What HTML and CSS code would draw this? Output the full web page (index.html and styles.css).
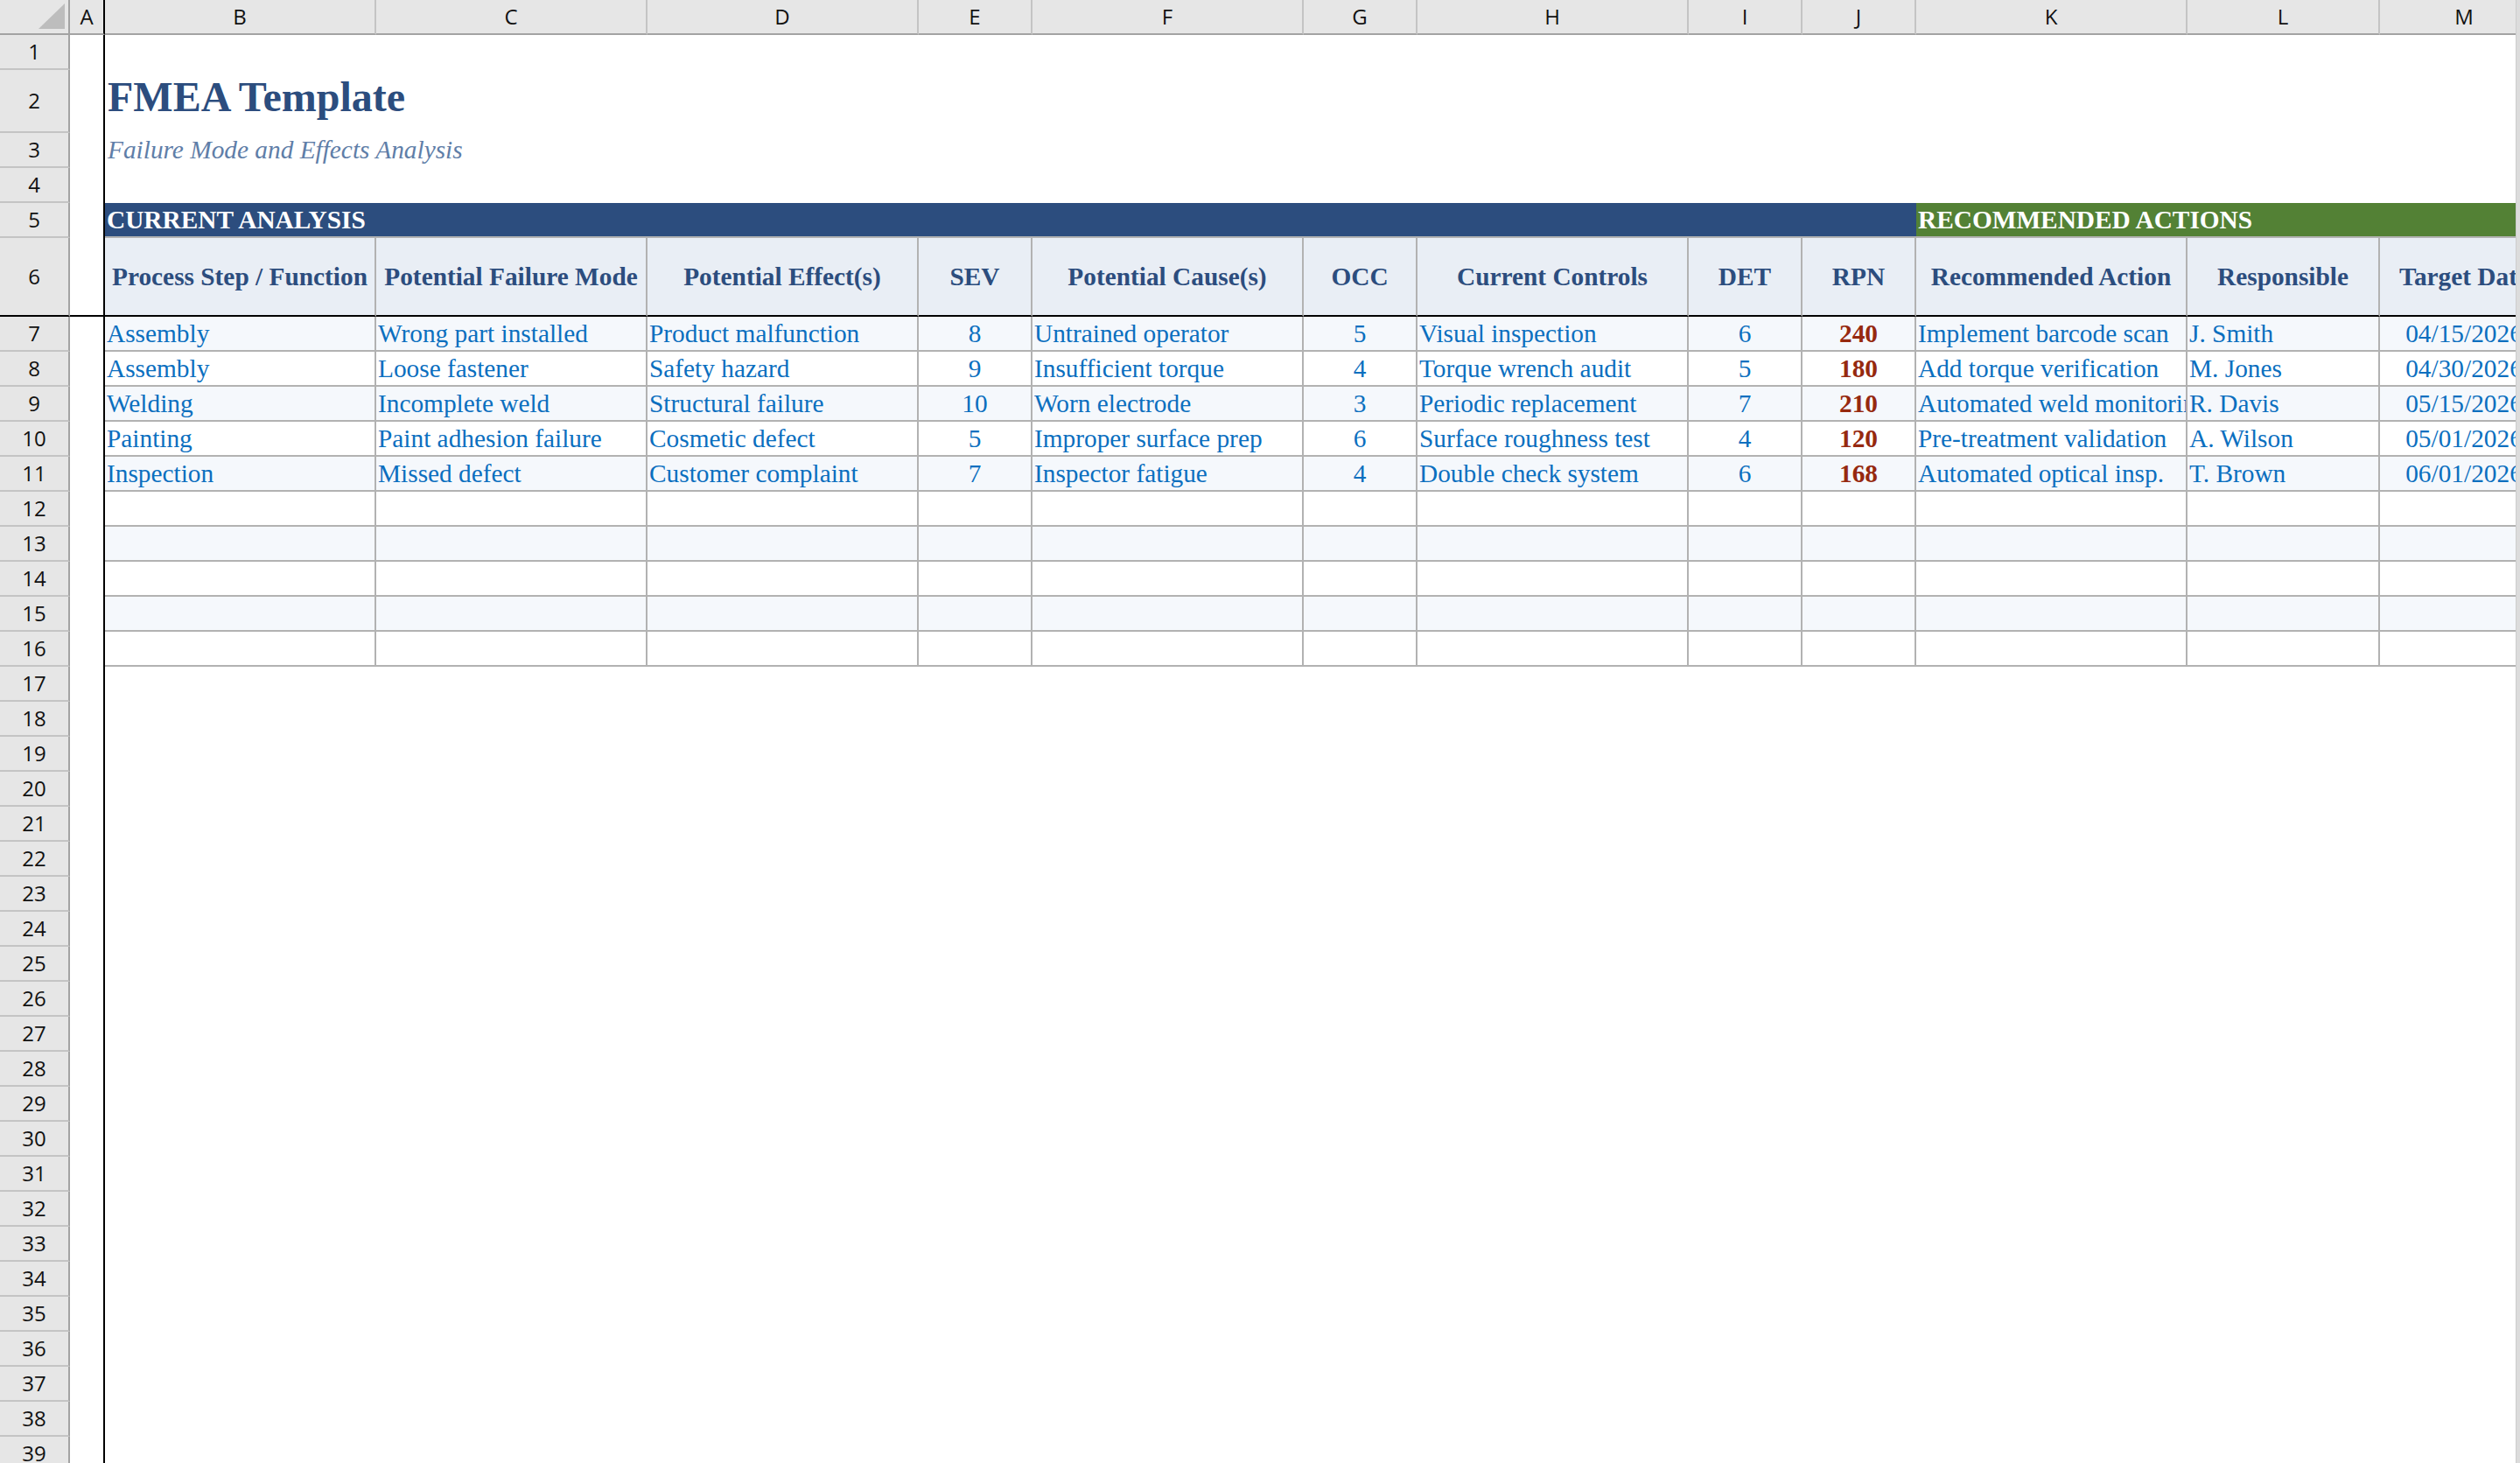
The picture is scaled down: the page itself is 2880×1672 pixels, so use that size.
FILE: index.html
```html
<!DOCTYPE html>
<html lang="en">
<head>
  <meta charset="UTF-8">
  <meta name="viewport" content="width=device-width, initial-scale=1.0">
  <title>FMEA Template</title>
  <link rel="stylesheet" href="styles.css">
</head>
<body>
  <div class="window">
    <div class="sheet">
      <!-- column letters -->
      <div class="row col-heads">
        <div class="corner">
          <svg width="80" height="38" viewBox="0 0 80 38"><polygon points="44,33 74,33 74,4" fill="#bdbdbd"/></svg>
        </div>
        <div class="ch freeze">A</div>
        <div class="ch">B</div>
        <div class="ch">C</div>
        <div class="ch">D</div>
        <div class="ch">E</div>
        <div class="ch">F</div>
        <div class="ch">G</div>
        <div class="ch">H</div>
        <div class="ch">I</div>
        <div class="ch">J</div>
        <div class="ch">K</div>
        <div class="ch">L</div>
        <div class="ch">M</div>
      </div>

      <div class="row"><div class="rh">1</div><div class="col-a"></div></div>
      <div class="row r-title"><div class="rh">2</div><div class="col-a"></div><div class="title">FMEA Template</div></div>
      <div class="row"><div class="rh">3</div><div class="col-a"></div><div class="subtitle">Failure Mode and Effects Analysis</div></div>
      <div class="row"><div class="rh">4</div><div class="col-a"></div></div>
      <div class="row">
        <div class="rh">5</div><div class="col-a"></div>
        <div class="band band-current">CURRENT ANALYSIS</div>
        <div class="band band-actions">RECOMMENDED ACTIONS</div>
      </div>

      <div class="row r-head">
        <div class="rh">6</div><div class="col-a"></div>
        <div class="th">Process Step / Function</div>
        <div class="th">Potential Failure Mode</div>
        <div class="th">Potential Effect(s)</div>
        <div class="th">SEV</div>
        <div class="th">Potential Cause(s)</div>
        <div class="th">OCC</div>
        <div class="th">Current Controls</div>
        <div class="th">DET</div>
        <div class="th">RPN</div>
        <div class="th">Recommended Action</div>
        <div class="th">Responsible</div>
        <div class="th">Target Date</div>
      </div>

      <div class="row r-data alt">
        <div class="rh">7</div><div class="col-a"></div>
        <div class="td">Assembly</div>
        <div class="td">Wrong part installed</div>
        <div class="td">Product malfunction</div>
        <div class="td num">8</div>
        <div class="td">Untrained operator</div>
        <div class="td num">5</div>
        <div class="td">Visual inspection</div>
        <div class="td num">6</div>
        <div class="td num rpn">240</div>
        <div class="td">Implement barcode scan</div>
        <div class="td">J. Smith</div>
        <div class="td num">04/15/2026</div>
      </div>
      <div class="row r-data">
        <div class="rh">8</div><div class="col-a"></div>
        <div class="td">Assembly</div>
        <div class="td">Loose fastener</div>
        <div class="td">Safety hazard</div>
        <div class="td num">9</div>
        <div class="td">Insufficient torque</div>
        <div class="td num">4</div>
        <div class="td">Torque wrench audit</div>
        <div class="td num">5</div>
        <div class="td num rpn">180</div>
        <div class="td">Add torque verification</div>
        <div class="td">M. Jones</div>
        <div class="td num">04/30/2026</div>
      </div>
      <div class="row r-data alt">
        <div class="rh">9</div><div class="col-a"></div>
        <div class="td">Welding</div>
        <div class="td">Incomplete weld</div>
        <div class="td">Structural failure</div>
        <div class="td num">10</div>
        <div class="td">Worn electrode</div>
        <div class="td num">3</div>
        <div class="td">Periodic replacement</div>
        <div class="td num">7</div>
        <div class="td num rpn">210</div>
        <div class="td">Automated weld monitoring</div>
        <div class="td">R. Davis</div>
        <div class="td num">05/15/2026</div>
      </div>
      <div class="row r-data">
        <div class="rh">10</div><div class="col-a"></div>
        <div class="td">Painting</div>
        <div class="td">Paint adhesion failure</div>
        <div class="td">Cosmetic defect</div>
        <div class="td num">5</div>
        <div class="td">Improper surface prep</div>
        <div class="td num">6</div>
        <div class="td">Surface roughness test</div>
        <div class="td num">4</div>
        <div class="td num rpn">120</div>
        <div class="td">Pre-treatment validation</div>
        <div class="td">A. Wilson</div>
        <div class="td num">05/01/2026</div>
      </div>
      <div class="row r-data alt">
        <div class="rh">11</div><div class="col-a"></div>
        <div class="td">Inspection</div>
        <div class="td">Missed defect</div>
        <div class="td">Customer complaint</div>
        <div class="td num">7</div>
        <div class="td">Inspector fatigue</div>
        <div class="td num">4</div>
        <div class="td">Double check system</div>
        <div class="td num">6</div>
        <div class="td num rpn">168</div>
        <div class="td">Automated optical insp.</div>
        <div class="td">T. Brown</div>
        <div class="td num">06/01/2026</div>
      </div>

      <!-- blank entry rows -->
      <div class="row r-data">
        <div class="rh">12</div><div class="col-a"></div>
        <div class="td"></div><div class="td"></div><div class="td"></div><div class="td"></div>
        <div class="td"></div><div class="td"></div><div class="td"></div><div class="td"></div>
        <div class="td"></div><div class="td"></div><div class="td"></div><div class="td"></div>
      </div>
      <div class="row r-data alt">
        <div class="rh">13</div><div class="col-a"></div>
        <div class="td"></div><div class="td"></div><div class="td"></div><div class="td"></div>
        <div class="td"></div><div class="td"></div><div class="td"></div><div class="td"></div>
        <div class="td"></div><div class="td"></div><div class="td"></div><div class="td"></div>
      </div>
      <div class="row r-data">
        <div class="rh">14</div><div class="col-a"></div>
        <div class="td"></div><div class="td"></div><div class="td"></div><div class="td"></div>
        <div class="td"></div><div class="td"></div><div class="td"></div><div class="td"></div>
        <div class="td"></div><div class="td"></div><div class="td"></div><div class="td"></div>
      </div>
      <div class="row r-data alt">
        <div class="rh">15</div><div class="col-a"></div>
        <div class="td"></div><div class="td"></div><div class="td"></div><div class="td"></div>
        <div class="td"></div><div class="td"></div><div class="td"></div><div class="td"></div>
        <div class="td"></div><div class="td"></div><div class="td"></div><div class="td"></div>
      </div>
      <div class="row r-data">
        <div class="rh">16</div><div class="col-a"></div>
        <div class="td"></div><div class="td"></div><div class="td"></div><div class="td"></div>
        <div class="td"></div><div class="td"></div><div class="td"></div><div class="td"></div>
        <div class="td"></div><div class="td"></div><div class="td"></div><div class="td"></div>
      </div>

      <div class="row"><div class="rh">17</div><div class="col-a"></div></div>
      <div class="row"><div class="rh">18</div><div class="col-a"></div></div>
      <div class="row"><div class="rh">19</div><div class="col-a"></div></div>
      <div class="row"><div class="rh">20</div><div class="col-a"></div></div>
      <div class="row"><div class="rh">21</div><div class="col-a"></div></div>
      <div class="row"><div class="rh">22</div><div class="col-a"></div></div>
      <div class="row"><div class="rh">23</div><div class="col-a"></div></div>
      <div class="row"><div class="rh">24</div><div class="col-a"></div></div>
      <div class="row"><div class="rh">25</div><div class="col-a"></div></div>
      <div class="row"><div class="rh">26</div><div class="col-a"></div></div>
      <div class="row"><div class="rh">27</div><div class="col-a"></div></div>
      <div class="row"><div class="rh">28</div><div class="col-a"></div></div>
      <div class="row"><div class="rh">29</div><div class="col-a"></div></div>
      <div class="row"><div class="rh">30</div><div class="col-a"></div></div>
      <div class="row"><div class="rh">31</div><div class="col-a"></div></div>
      <div class="row"><div class="rh">32</div><div class="col-a"></div></div>
      <div class="row"><div class="rh">33</div><div class="col-a"></div></div>
      <div class="row"><div class="rh">34</div><div class="col-a"></div></div>
      <div class="row"><div class="rh">35</div><div class="col-a"></div></div>
      <div class="row"><div class="rh">36</div><div class="col-a"></div></div>
      <div class="row"><div class="rh">37</div><div class="col-a"></div></div>
      <div class="row"><div class="rh">38</div><div class="col-a"></div></div>
      <div class="row"><div class="rh">39</div><div class="col-a"></div></div>
    </div>
    <div class="edge"></div>
  </div>
</body>
</html>
```

FILE: styles.css
```css
:root {
  --navy: #2c4d7e;
  --green: #538135;
  --head-fill: #e9eef5;
  --alt-fill: #f5f8fc;
  --cell-text: #0b6fbf;
  --rpn-text: #96290f;
  --grid: #b2b2b2;
  --hdr-bg: #e6e6e6;
  --hdr-line: #c4c4c4;
  --hdr-edge: #a3a3a3;
  --cols: 80px 40px 310px 310px 310px 130px 310px 130px 310px 130px 130px 310px 220px 194px;
}

* {
  box-sizing: border-box;
}

body {
  margin: 0;
  background: #fff;
  font-family: "Liberation Serif", "Times New Roman", serif;
  font-size: 29.33px;
}

.window {
  display: flex;
  height: 100vh;
  overflow: hidden;
}

.sheet {
  flex: 1;
  overflow: hidden;
}

.edge {
  width: 5px;
  background: #dcdcdc;
  border-left: 1px solid #cdcdcd;
}

.row {
  display: grid;
  grid-template-columns: var(--cols);
  height: 40px;
  width: 2914px;
  line-height: 34px;
  white-space: nowrap;
}

/* headings: letters and numbers */
.col-heads > div {
  background: var(--hdr-bg);
  border-bottom: 2px solid var(--hdr-edge);
}

.corner {
  border-right: 2px solid var(--hdr-edge);
}

.corner svg {
  display: block;
}

.ch {
  display: flex;
  align-items: center;
  justify-content: center;
  font-family: "Open Sans", "Noto Sans", sans-serif;
  font-size: 24px;
  color: #111;
  border-right: 2px solid var(--hdr-line);
}

.rh {
  display: flex;
  align-items: center;
  justify-content: center;
  background: var(--hdr-bg);
  border-right: 2px solid var(--hdr-edge);
  border-bottom: 2px solid var(--hdr-line);
  font-family: "Open Sans", "Noto Sans", sans-serif;
  font-size: 24px;
  color: #111;
}

/* frozen pane edges */
.col-a,
.ch.freeze {
  border-right: 2px solid #000;
}

/* title block */
.r-title {
  height: 72px;
}

.title,
.subtitle {
  grid-column: 3 / -1;
  display: flex;
  align-items: flex-end;
  padding: 0 0 4px 3px;
}

.title {
  font-size: 48px;
  line-height: 55px;
  font-weight: bold;
  color: var(--navy);
  padding-bottom: 14px;
}

.subtitle {
  font-style: italic;
  color: #5f7ea8;
}

/* section bands */
.band {
  display: flex;
  align-items: flex-end;
  padding: 0 0 2px 2px;
  font-weight: bold;
  color: #fff;
  border-bottom: 2px solid var(--grid);
  overflow: hidden;
}

.band-current {
  grid-column: 3 / 12;
  background: var(--navy);
}

.band-actions {
  grid-column: 12 / -1;
  background: var(--green);
}

/* column titles */
.r-head {
  height: 90px;
}

.r-head > div {
  border-bottom: 2px solid #000;
}

.th {
  display: flex;
  align-items: center;
  justify-content: center;
  background: var(--head-fill);
  border-right: 2px solid var(--grid);
  font-weight: bold;
  color: var(--navy);
  overflow: hidden;
}

/* entries */
.td {
  display: flex;
  align-items: flex-end;
  padding: 0 2px 2px 2px;
  color: var(--cell-text);
  border-right: 2px solid var(--grid);
  border-bottom: 2px solid var(--grid);
  overflow: hidden;
}

.r-data.alt .td {
  background: var(--alt-fill);
}

.td.num {
  justify-content: center;
}

.td.rpn {
  font-weight: bold;
  color: var(--rpn-text);
}
```
